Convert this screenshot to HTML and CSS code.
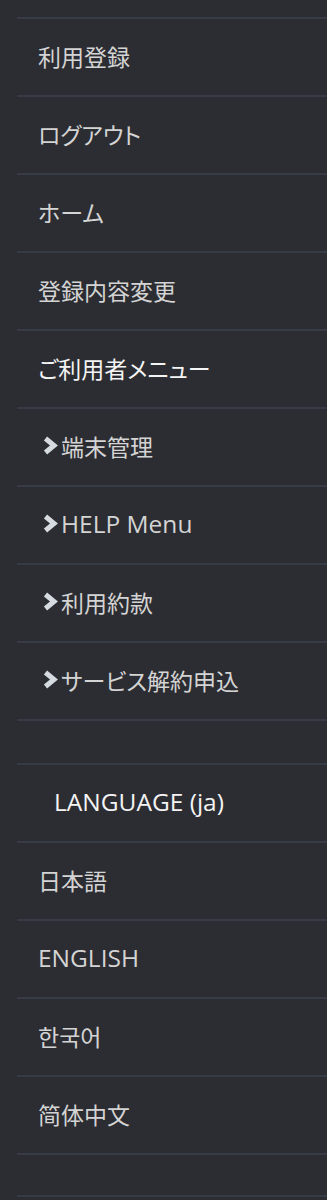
FILE: index.html
```html
<!DOCTYPE html>
<html lang="ja">
<head>
    <meta charset="UTF-8">
    <meta name="viewport" content="width=device-width, initial-scale=1.0">
    <title>メニュー</title>
    <link rel="stylesheet" href="styles.css">
</head>
<body>

    <div class="sidebar">
        <ul class="menu">
            <li><a href="#">利用登録</a></li>
            <li><a href="#">ログアウト</a></li>
            <li><a href="#">ホーム</a></li>
            <li><a href="#">登録内容変更</a></li>
            <li class="menu-title">ご利用者メニュー</li>
            <li><a href="#" class="sub"><svg class="chevron" viewBox="0 0 16 19"><polyline points="3.5,2.5 12,9.5 3.5,16.5"/></svg>端末管理</a></li>
            <li><a href="#" class="sub"><svg class="chevron" viewBox="0 0 16 19"><polyline points="3.5,2.5 12,9.5 3.5,16.5"/></svg><span class="en">HELP Menu</span></a></li>
            <li><a href="#" class="sub"><svg class="chevron" viewBox="0 0 16 19"><polyline points="3.5,2.5 12,9.5 3.5,16.5"/></svg>利用約款</a></li>
            <li><a href="#" class="sub"><svg class="chevron" viewBox="0 0 16 19"><polyline points="3.5,2.5 12,9.5 3.5,16.5"/></svg>サービス解約申込</a></li>
            <li class="spacer"></li>
            <li class="menu-title lang-title"><span class="en">LANGUAGE (ja)</span></li>
            <li><a href="#">日本語</a></li>
            <li><a href="#" class="en">ENGLISH</a></li>
            <li><a href="#">한국어</a></li>
            <li><a href="#">简体中文</a></li>
            <li class="spacer last"></li>
        </ul>
    </div>

</body>
</html>
```

FILE: styles.css
```css
body {
    font-family: 'Open Sans', 'Noto Sans CJK JP', sans-serif;
    font-feature-settings: "palt";
    margin: 0;
    padding: 0;
    background-color: #2c2d32;
    color: #d4d4d4;
}

.sidebar {
    padding-top: 17px;
    padding-left: 17px;
}

.menu {
    list-style: none;
    margin: 0;
    padding: 0;
    border-bottom: 2px solid #363b46;
}

.menu li {
    border-top: 2px solid #363b46;
    height: 73px;
    padding-bottom: 3px;
    display: flex;
    align-items: center;
    padding-left: 21px;
    font-size: 23px;
}

.menu a {
    color: #d4d4d4;
    text-decoration: none;
    display: flex;
    align-items: center;
}

.menu .en {
    font-size: 24.5px;
}

.menu a.sub {
    margin-left: 4px;
}

.chevron {
    width: 16px;
    height: 19px;
    fill: none;
    stroke: #d6dbe2;
    stroke-width: 5;
    stroke-linejoin: miter;
    margin-right: 3px;
}

.menu-title {
    color: #f4f4f4;
}

.menu .lang-title {
    padding-left: 37px;
}

.menu .spacer {
    height: 42px;
    padding-bottom: 0;
}

.menu .spacer.last {
    height: 40px;
}
```
